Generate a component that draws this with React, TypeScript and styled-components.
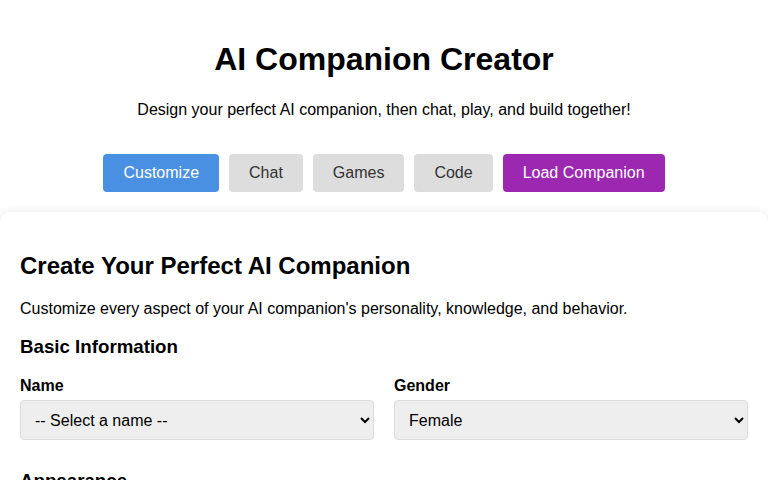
import React from "react";
import styled, { createGlobalStyle } from "styled-components";

const Global = createGlobalStyle`
  html, body { margin: 0; padding: 0; background: #fff; }
  body { font-family: "Liberation Sans", Arial, sans-serif; color: #000; }
  * { box-sizing: border-box; }
`;

const Header = styled.header`
  text-align: center;
  padding-top: 41px;
`;

const Title = styled.h1`
  margin: 0;
  font-size: 32px;
  font-weight: bold;
  line-height: 37px;
`;

const Subtitle = styled.p`
  margin: 23px 0 0;
  font-size: 16px;
  line-height: 18px;
`;

const Nav = styled.nav`
  display: flex;
  justify-content: center;
  gap: 10px;
  margin-top: 35px;
`;

const TabButton = styled.button<{ $variant?: "active" | "purple" | "plain" }>`
  font-family: "Liberation Sans", Arial, sans-serif;
  font-size: 16px;
  line-height: 18px;
  padding: 10px 20px;
  border: none;
  border-radius: 4px;
  cursor: pointer;
  background: ${(p) =>
    p.$variant === "active" ? "#4a90e2" : p.$variant === "purple" ? "#9c27b0" : "#dddddd"};
  color: ${(p) => (p.$variant === "plain" ? "#333" : "#fff")};
`;

const Card = styled.section`
  margin-top: 20px;
  background: #fff;
  border-radius: 10px;
  box-shadow: 0 0 10px rgba(0, 0, 0, 0.1);
  padding: 40px 20px 20px;
`;

const CardTitle = styled.h2`
  margin: 0;
  font-size: 24px;
  line-height: 28px;
  font-weight: bold;
`;

const Intro = styled.p`
  margin: 20px 0 0;
  font-size: 16px;
  line-height: 18px;
`;

const SectionTitle = styled.h3<{ $gap?: number }>`
  margin: ${(p) => p.$gap ?? 18}px 0 0;
  font-size: 18.72px;
  line-height: 22px;
  font-weight: bold;
`;

const Row = styled.div`
  display: grid;
  grid-template-columns: 1fr 1fr;
  gap: 20px;
  margin-top: 19px;
`;

const Group = styled.div`
  display: flex;
  flex-direction: column;
`;

const Label = styled.label`
  font-size: 16px;
  line-height: 18px;
  font-weight: bold;
  margin-bottom: 5px;
`;

const Select = styled.select`
  font-family: "Liberation Sans", Arial, sans-serif;
  font-size: 16px;
  height: 40px;
  padding: 0 10px;
  border: 1px solid #ddd;
  border-radius: 4px;
  background: #eeeeee;
  color: #000;
  width: 100%;
`;

export default function App() {
  return (
    <>
      <Global />
      <Header>
        <Title>AI Companion Creator</Title>
        <Subtitle>Design your perfect AI companion, then chat, play, and build together!</Subtitle>
        <Nav>
          <TabButton $variant="active">Customize</TabButton>
          <TabButton $variant="plain">Chat</TabButton>
          <TabButton $variant="plain">Games</TabButton>
          <TabButton $variant="plain">Code</TabButton>
          <TabButton $variant="purple">Load Companion</TabButton>
        </Nav>
      </Header>
      <Card>
        <CardTitle>Create Your Perfect AI Companion</CardTitle>
        <Intro>Customize every aspect of your AI companion's personality, knowledge, and behavior.</Intro>
        <SectionTitle>Basic Information</SectionTitle>
        <Row>
          <Group>
            <Label>Name</Label>
            <Select defaultValue="">
              <option value="">-- Select a name --</option>
              <option>Luna</option>
              <option>Nova</option>
            </Select>
          </Group>
          <Group>
            <Label>Gender</Label>
            <Select defaultValue="Female">
              <option>Female</option>
              <option>Male</option>
              <option>Non-binary</option>
            </Select>
          </Group>
        </Row>
        <SectionTitle $gap={30}>Appearance</SectionTitle>
      </Card>
    </>
  );
}
